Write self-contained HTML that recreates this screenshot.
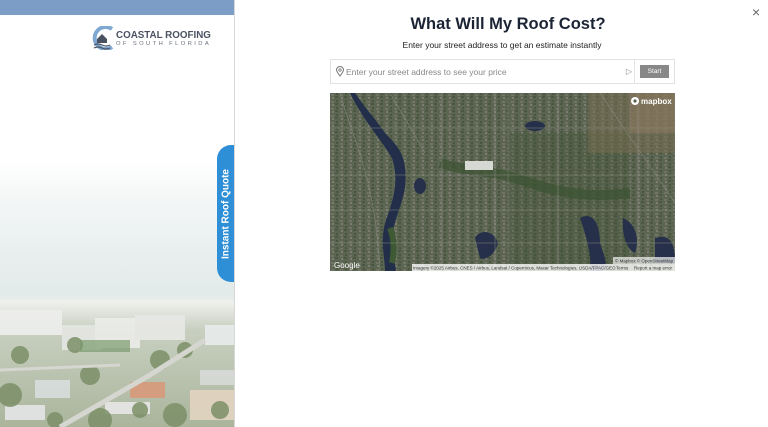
<!DOCTYPE html>
<html><head><meta charset="utf-8">
<style>
*{margin:0;padding:0;box-sizing:border-box}
html,body{width:768px;height:427px;overflow:hidden;background:#fff;font-family:"Liberation Sans",sans-serif}
#left{position:absolute;left:0;top:0;width:235px;height:427px;overflow:hidden;
background:linear-gradient(180deg,#fff 0px,#fff 160px,#f4f6f6 200px,#e9efef 250px,#e2eaea 295px,#eef0ec 302px,#e4e6e0 310px,#c8cfc0 330px,#aab59c 427px);border-right:1px solid #d8d8d8}
#topbar{position:absolute;left:0;top:0;width:235px;height:15px;background:#7c9dc6}
#tab{position:absolute;left:217px;top:145px;width:18px;height:137px;background:#2f8fd6;border-radius:14px 0 0 14px}
#tab span{position:absolute;left:50%;top:50%;transform:translate(-50%,-50%) rotate(-90deg);color:#fff;font-weight:bold;font-size:10px;white-space:nowrap}
h1{position:absolute;left:336px;width:344px;top:15px;text-align:center;font-size:16.5px;font-weight:bold;color:#1b2435}
.sub{position:absolute;left:330px;width:344px;top:40px;text-align:center;font-size:8.5px;color:#222}
#bar{position:absolute;left:330px;top:59px;width:345px;height:25px;border:1px solid #e2e2e2;background:#fff}
#bar .ph{position:absolute;left:15px;top:7px;font-size:8.5px;color:#888}
#bar .btn{position:absolute;right:5px;top:5px;width:29px;height:13px;background:#888;color:#fff;font-size:6.5px;text-align:center;line-height:13px}
#bar .sep{position:absolute;right:39px;top:0;width:1px;height:23px;background:#e5e5e5}
#map{position:absolute;left:330px;top:93px;width:345px;height:178px;overflow:hidden}
.x{position:absolute;left:752px;top:4px;font-size:14px;color:#666}
</style></head><body>
<div id="left">
<div id="topbar"></div>
<svg style="position:absolute;left:0;top:300px" width="235" height="127">
<g opacity=".9">
<rect x="0" y="10" width="62" height="25" fill="#eeefed"/><rect x="62" y="25" width="40" height="25" fill="#e5e6e2"/>
<rect x="95" y="18" width="45" height="30" fill="#ecedea"/><rect x="135" y="15" width="50" height="25" fill="#e8e9e6"/>
<rect x="205" y="25" width="30" height="20" fill="#e8ecec"/>
<rect x="35" y="80" width="35" height="18" fill="#d9dede"/><rect x="130" y="82" width="35" height="16" fill="#d89a7c"/>
<rect x="190" y="90" width="45" height="30" fill="#e3d5c2"/><rect x="105" y="102" width="45" height="12" fill="#e8e8e8"/>
<rect x="5" y="105" width="40" height="15" fill="#e4e6e6"/><rect x="200" y="70" width="35" height="15" fill="#d8dbd8"/>
</g>
<g fill="#7c9068" opacity=".85">
<circle cx="20" cy="55" r="9"/><circle cx="75" cy="45" r="8"/><circle cx="160" cy="60" r="10"/>
<circle cx="10" cy="95" r="12"/><circle cx="100" cy="120" r="12"/><circle cx="175" cy="115" r="12"/>
<circle cx="220" cy="110" r="9"/><circle cx="90" cy="75" r="10"/><circle cx="185" cy="50" r="8"/>
<circle cx="55" cy="120" r="8"/><circle cx="140" cy="110" r="8"/>
</g>
<rect x="80" y="40" width="50" height="12" fill="#7a9a6c" opacity=".7"/>
<path d="M60 127 L150 75 L205 40" stroke="#d6d6d0" stroke-width="5" fill="none"/>
<path d="M0 70 L120 65" stroke="#d6d6d0" stroke-width="3" fill="none"/>
</svg>
<svg style="position:absolute;left:90px;top:26px" width="26" height="24" viewBox="0 0 26 24">
<path d="M22 3 A11 11 0 1 0 22 21" stroke="#7fa8d2" stroke-width="4" fill="none"/>
<path d="M7 13 L12 8 L17 13 L17 17 L7 17Z" fill="#4a5160"/>
<path d="M4 19 q4 -2 8 0 t8 0 M4 22 q4 -2 8 0 t8 0" stroke="#4a5160" stroke-width="1.2" fill="none"/>
</svg>
<div style="position:absolute;left:116px;top:30px;font-size:9.8px;font-weight:bold;color:#4c5262">COASTAL ROOFING</div>
<div style="position:absolute;left:116px;top:41px;font-size:5.8px;color:#6a7080;letter-spacing:2.4px">OF SOUTH FLORIDA</div>
<div id="tab"><span>Instant Roof Quote</span></div>
</div>
<div class="x">×</div>
<h1>What Will My Roof Cost?</h1>
<div class="sub">Enter your street address to get an estimate instantly</div>
<div id="bar">
<svg style="position:absolute;left:5px;top:6px" width="8" height="11" viewBox="0 0 8 11"><path d="M4 10 C1 6 0.5 5 0.5 4 A3.5 3.5 0 0 1 7.5 4 C7.5 5 7 6 4 10Z" stroke="#777" fill="none"/><circle cx="4" cy="4" r="1.2" fill="none" stroke="#777" stroke-width=".8"/></svg>
<div class="ph">Enter your street address to see your price</div>
<div style="position:absolute;right:42px;top:7px;font-size:8px;color:#888">▷</div>
<div class="sep"></div>
<div class="btn">Start</div>
</div>
<div id="map">
<svg width="345" height="178">
<defs>
<pattern id="t" width="9" height="7" patternUnits="userSpaceOnUse">
<rect width="9" height="7" fill="#5c6552"/>
<rect x="1" y="1" width="3" height="2" fill="#6f7465"/>
<rect x="5" y="3" width="3" height="2" fill="#4b5741"/>
<rect x="2" y="4" width="2" height="2" fill="#7b7d70"/>
<rect x="6" y="0" width="2" height="2" fill="#48563f"/>
</pattern>
</defs>
<rect width="345" height="178" fill="url(#t)"/>
<rect x="180" y="40" width="120" height="138" fill="#3f5236" opacity=".3"/>
<rect x="258" y="0" width="87" height="60" fill="#7a6d52" opacity=".5"/>
<rect x="300" y="0" width="45" height="40" fill="#8a7a60" opacity=".6"/>
<path d="M110 70 C140 80 160 75 200 90 C230 100 260 105 300 100" stroke="#3c5232" stroke-width="10" fill="none" opacity=".7"/>
<path d="M25 0 C35 15 45 25 55 40 C70 55 78 65 75 95 C70 120 62 130 62 150 C62 165 66 172 66 178 L55 178 C55 165 50 150 55 130 C62 110 70 90 62 65 C50 45 35 30 20 0Z" fill="#232f4a"/>
<path d="M60 135 Q66 150 62 170" stroke="#3d5a35" stroke-width="6" fill="none"/>
<ellipse cx="205" cy="33" rx="10" ry="5" fill="#26304a"/>
<path d="M145 145 C150 135 165 138 168 150 C165 162 155 168 150 165Z" fill="#26304a"/>
<path d="M250 125 C262 118 270 130 270 150 C275 165 280 175 270 178 L260 178 C262 160 255 140 250 125Z" fill="#26304a"/>
<path d="M293 125 C305 130 310 145 305 160 C295 155 292 140 293 125Z" fill="#26304a"/>
<path d="M325 145 C340 140 345 150 345 170 L325 170Z" fill="#26304a"/>
<ellipse cx="90" cy="93" rx="6" ry="8" fill="#26304a"/>
<rect x="135" y="68" width="28" height="9" fill="#d6d8d3"/>
<g stroke="#8d8f84" stroke-width=".8" fill="none" opacity=".6">
<path d="M112 0 V178 M165 0 V178 M178 0 V178 M228 0 V178 M308 0 V178"/>
<path d="M0 82 H345 M0 117 H345 M0 150 H345 M0 35 H345"/>
<path d="M10 0 C20 40 45 80 50 178"/><path d="M270 0 L345 110"/><path d="M60 0 L95 60"/>
</g>
<rect x="82" y="171" width="263" height="7" fill="#ffffffcc"/>
<text x="83" y="176.5" font-size="4.5" fill="#333" font-family="Liberation Sans">Imagery ©2025 Airbus, CNES / Airbus, Landsat / Copernicus, Maxar Technologies, USDA/FPAC/GEO</text>
<text x="286" y="176.5" font-size="4.5" fill="#333" font-family="Liberation Sans">Terms</text>
<text x="304" y="176.5" font-size="4.5" fill="#333" font-family="Liberation Sans">Report a map error</text>
<rect x="283" y="164" width="62" height="7" fill="#ffffffaa"/>
<text x="285" y="169.5" font-size="4.5" fill="#333" font-family="Liberation Sans">© Mapbox © OpenStreetMap</text>
<text x="4" y="175" font-size="8" fill="#fff" font-family="Liberation Sans">Google</text>
<circle cx="305" cy="8" r="4" fill="#fff"/><circle cx="305" cy="8" r="1.6" fill="#59624f"/>
<text x="311" y="11" font-size="8" fill="#fff" font-family="Liberation Sans" font-weight="bold">mapbox</text>
</svg>
</div>
</body></html>
